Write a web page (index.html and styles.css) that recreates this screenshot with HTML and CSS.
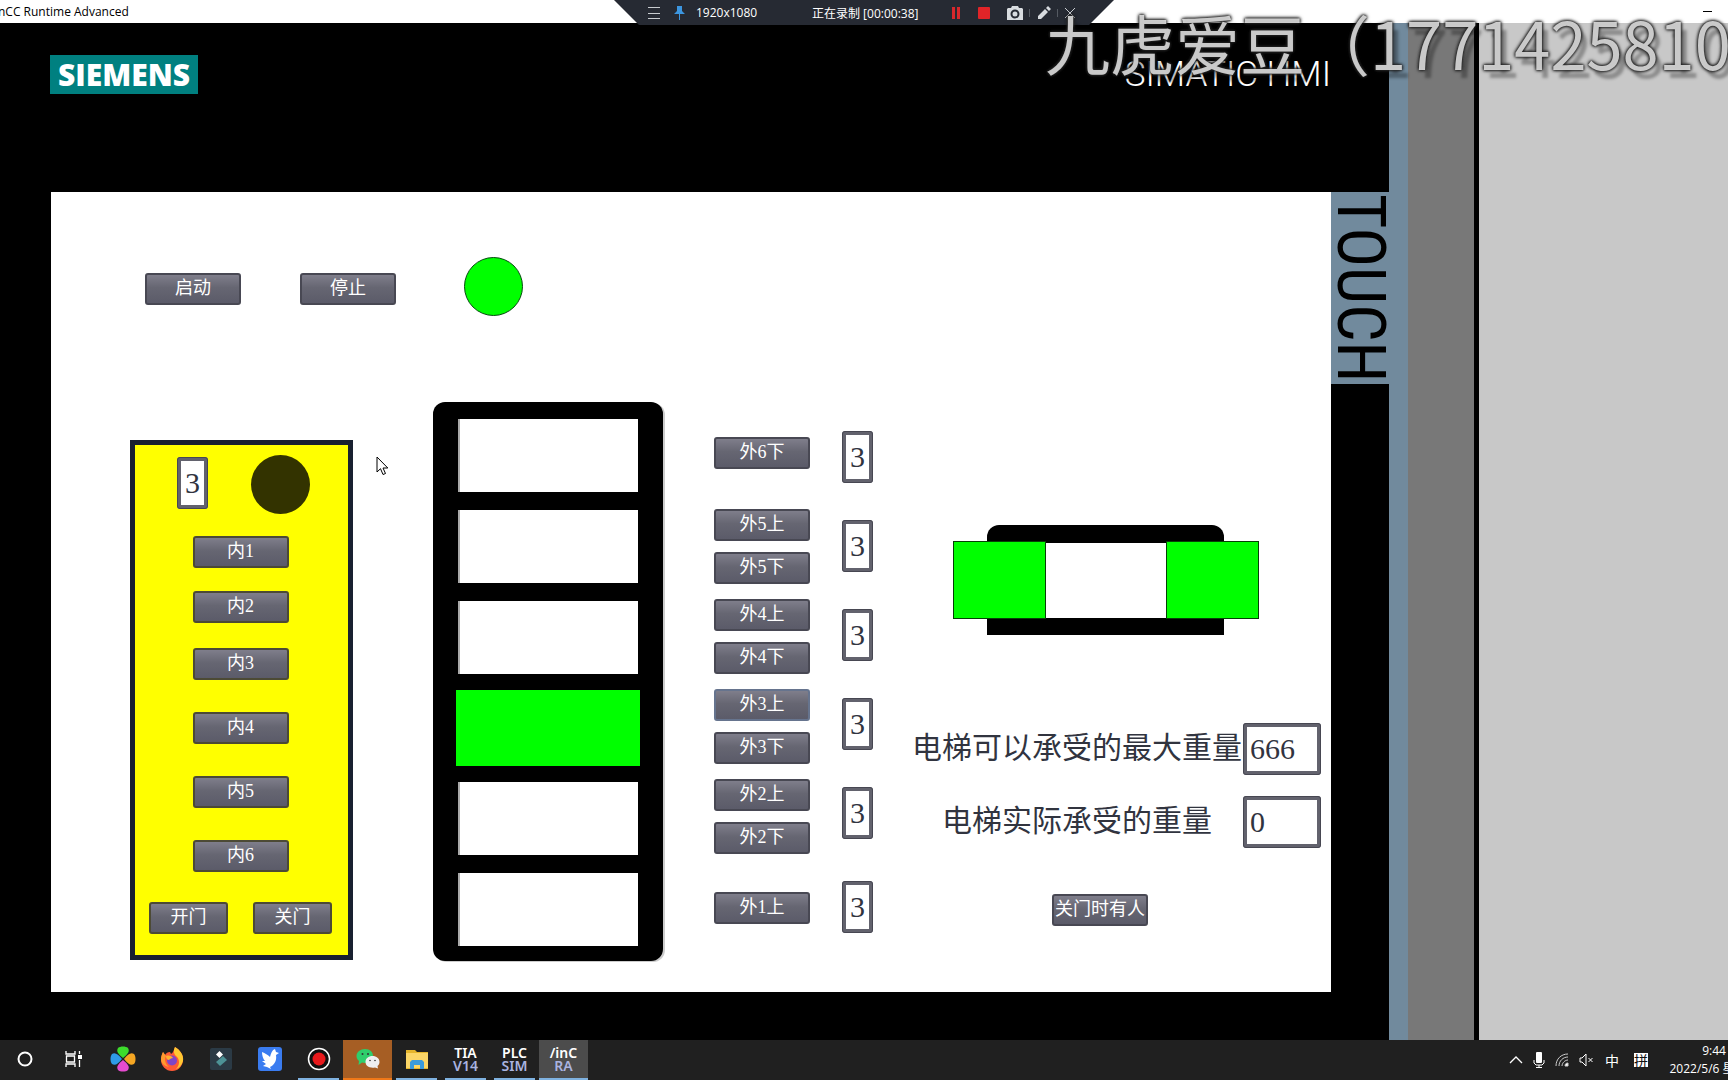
FILE: index.html
```html
<!DOCTYPE html>
<html lang="zh-CN">
<head>
  <meta charset="UTF-8">
  <meta name="viewport" content="width=device-width, initial-scale=1.0">
  <title>WinCC Runtime Advanced</title>
  <link rel="stylesheet" href="styles.css">
</head>
<body>
  <header class="titlebar">
    <span class="title">nCC Runtime Advanced</span>
    <span class="minimize"></span>
  </header>

  <main class="desktop">
    <div class="bezel">
      <div class="bezel-head">
        <div class="logo">SIEMENS</div>
        <div class="model">SIMATIC HMI</div>
      </div>
      <section class="screen">
        <div class="power">
          <div class="power-buttons">
            <button class="btn">启动</button>
            <button class="btn">停止</button>
          </div>
          <div class="lamp on"></div>
        </div>

        <div class="plant">
          <div class="car">
            <div class="car-head">
              <output class="digit">3</output>
              <div class="lamp"></div>
            </div>
            <div class="car-floors">
              <button class="btn">内1</button>
              <button class="btn">内2</button>
              <button class="btn">内3</button>
              <button class="btn">内4</button>
              <button class="btn">内5</button>
              <button class="btn">内6</button>
            </div>
            <div class="car-doors">
              <button class="btn">开门</button>
              <button class="btn">关门</button>
            </div>
          </div>

          <div class="shaft">
            <div class="cell"></div>
            <div class="cell"></div>
            <div class="cell"></div>
            <div class="cell here"></div>
            <div class="cell"></div>
            <div class="cell"></div>
          </div>

          <div class="calls">
            <div class="floor"><button class="btn">外6下</button></div>
            <div class="floor"><button class="btn">外5上</button><button class="btn">外5下</button></div>
            <div class="floor"><button class="btn">外4上</button><button class="btn">外4下</button></div>
            <div class="floor"><button class="btn focus">外3上</button><button class="btn">外3下</button></div>
            <div class="floor"><button class="btn">外2上</button><button class="btn">外2下</button></div>
            <div class="floor"><button class="btn">外1上</button></div>
          </div>

          <div class="digits">
            <output class="digit">3</output>
            <output class="digit">3</output>
            <output class="digit">3</output>
            <output class="digit">3</output>
            <output class="digit">3</output>
            <output class="digit">3</output>
          </div>

          <div class="side">
            <div class="door">
              <div class="leaf"></div>
              <div class="opening"></div>
              <div class="leaf"></div>
            </div>
            <div class="weights">
              <label for="maxWeight">电梯可以承受的最大重量</label>
              <input id="maxWeight" type="text" value="666">
              <label for="realWeight">电梯实际承受的重量</label>
              <input id="realWeight" type="text" value="0">
            </div>
            <button class="btn blocked">关门时有人</button>
          </div>
        </div>

        <svg class="pointer" width="13" height="20" viewBox="0 0 13 20">
          <path d="M1 1v15l3.500-3.300 2.500 5.800 2.500-1-2.500-5.500h4.800z" fill="#fff" stroke="#000"/>
        </svg>
      </section>
      <div class="touch">TOUCH</div>
    </div>
    <div class="edge"></div>
    <div class="wall"></div>
  </main>

  <footer class="taskbar">
    <nav class="apps">
      <button class="app" aria-label="Cortana">
        <svg width="24" height="24" viewBox="0 0 24 24"><circle cx="12" cy="12" r="6.500" fill="none" stroke="#fff" stroke-width="2"/></svg>
      </button>
      <button class="app" aria-label="任务视图">
        <svg width="24" height="24" viewBox="0 0 24 24" fill="none" stroke="#fff" stroke-width="1.300"><path d="M4 4v3h9V4M4 20v-3h9v3M4.500 9h8v6h-8zM17.500 4v3M17.500 13v7"/><path d="M16 8h4v4h-4z" fill="#fff" stroke="none"/></svg>
      </button>
      <button class="app" aria-label="四叶草">
        <svg width="26" height="26" viewBox="0 0 26 26">
          <path d="M13 12C8 8 6 5 8 2c2-2 8-2 10 0 2 3 0 6-5 10z" fill="#3ddc2c"/>
          <path d="M14 13c4-5 7-7 10-5 2 2 2 8 0 10-3 2-6 0-10-5z" fill="#f5a623"/>
          <path d="M13 14c5 4 7 7 5 10-2 2-8 2-10 0-2-3 0-6 5-10z" fill="#e64bd0"/>
          <path d="M12 13c-4 5-7 7-10 5-2-2-2-8 0-10 3-2 6 0 10 5z" fill="#2f9be8"/>
        </svg>
      </button>
      <button class="app" aria-label="Firefox">
        <svg width="24" height="24" viewBox="0 0 24 24">
          <path d="M3 5l2 3c1-2 3-3 5-3l1 2c2-1 3-4 4-7 5 3 9 8 8 14-1 6-5 10-11 10S1 19 1 13c0-3 1-5 2-8z" fill="#ff5a36"/>
          <path d="M15 0c5 3 9 8 8 14-1 4-4 7-7 8 4-4 4-10 0-13-2-2-3-5-1-9z" fill="#ffc832"/>
          <path d="M3 5l3 4c-2 3-1 8 3 11-5-1-8-4-8-8 0-3 1-5 2-7z" fill="#ff9a2e"/>
          <circle cx="12" cy="13.500" r="5" fill="#8045c8"/>
          <path d="M6 9c3-1 6 0 7 2-2 0-3 1-4 2-2 0-3-2-3-4z" fill="#ffb02e"/>
        </svg>
      </button>
      <button class="app" aria-label="Filmora">
        <svg width="24" height="24" viewBox="0 0 24 24"><rect x="1" y="1" width="22" height="22" rx="2" fill="#2b3a45"/><path d="M10.500 4l3.500 3.500-3.500 3.500L7 7.500z" fill="#fff"/><path d="M14 9l4 4-7 6-4-4z" fill="#4d9296"/></svg>
      </button>
      <button class="app" aria-label="迅雷">
        <svg width="24" height="24" viewBox="0 0 24 24"><rect width="24" height="24" rx="3" fill="#3a7cf0"/><path d="M4 5c3 1 6 3 8 5 1-4 2-7 5-8l1 3 3 1-3 2c1 6-2 10-6 12l1 2-4-2-4-1 3-2-4-3h3C5 12 4 8 4 5z" fill="#fff"/></svg>
      </button>
      <button class="app open" aria-label="录屏">
        <svg width="24" height="24" viewBox="0 0 24 24"><circle cx="12" cy="12" r="10.500" fill="#111" stroke="#fff" stroke-width="1.500"/><circle cx="12" cy="12" r="6.500" fill="#e8191c"/></svg>
      </button>
      <button class="app notify" aria-label="微信">
        <svg width="24" height="24" viewBox="0 0 24 24">
          <path d="M9 2c5 0 8 3 8 7s-3 7-8 7l-3-.500L2.500 18l.500-4C1 12 .500 11 .500 9c0-4 4-7 8.500-7z" fill="#2fce6c"/>
          <path d="M16.500 9c4 0 7 2.500 7 6 0 2-1 3-2 4l.500 2.500-3-1c-6 1-9.500-2-9.500-5.500s3-6 7-6z" fill="#eee"/>
          <g fill="#333"><circle cx="6.500" cy="7" r="1"/><circle cx="12" cy="7" r="1"/><circle cx="14" cy="13.500" r=".800"/><circle cx="19" cy="13.500" r=".800"/></g>
        </svg>
      </button>
      <button class="app open" aria-label="文件资源管理器">
        <svg width="24" height="24" viewBox="0 0 24 24"><path d="M1 3h9l2 2h11v17H1z" fill="#e5b52c"/><path d="M1 6h22v15H1z" fill="#fbd667"/><path d="M5 22v-7l2-2h10l2 2v7h-4v-4H9v4z" fill="#3a9bdc"/></svg>
      </button>
      <button class="app open tile"><span>TIA</span><span>V14</span></button>
      <button class="app open tile"><span>PLC</span><span>SIM</span></button>
      <button class="app active tile"><span>/inC</span><span>RA</span></button>
    </nav>
    <div class="tray">
      <svg width="14" height="8" viewBox="0 0 14 8"><path d="M1 7l6-6 6 6" fill="none" stroke="#fff" stroke-width="1.300"/></svg>
      <svg width="12" height="16" viewBox="0 0 12 16"><rect x="3" width="6" height="11" rx="1" fill="#fff"/><path d="M1 8v3l2 2h6l2-2V8M6 13v3M3 15.500h6" fill="none" stroke="#fff"/></svg>
      <svg width="14" height="14" viewBox="0 0 14 14" fill="none" stroke="#ccc"><path d="M1 13C1 6 6 1 13 1M4 13c0-5 4-9 9-9M7 13c0-3 3-6 6-6"/><path d="M10 13c0-2 1-3 3-3v3z" fill="#fff"/></svg>
      <svg width="15" height="14" viewBox="0 0 15 14" fill="none" stroke="#fff"><path d="M1 5h2l4-4v12L3 9H1zM9.500 5l4 4M13.500 5l-4 4"/></svg>
      <span class="ime">中</span>
      <span class="ime pinyin">拼</span>
    </div>
    <div class="clock">
      <span>9:44</span>
      <span>2022/5/6 星期五</span>
    </div>
  </footer>

  <div class="recorder">
    <svg width="12" height="12" viewBox="0 0 12 12"><path d="M0 .5h12M0 6.500h12M0 11.500h12" stroke="#c8ccd0"/></svg>
    <svg class="pin" width="11" height="14" viewBox="0 0 11 14"><path d="M3 0h5v5l3 3H0l3-3z" fill="#3c96e0"/><path d="M5.500 8v6" stroke="#3c96e0"/></svg>
    <span class="size">1920x1080</span>
    <span class="status">正在录制 [00:00:38]</span>
    <svg class="pause" width="9" height="12" viewBox="0 0 9 12"><path d="M0 0h3v12H0zM5 0h3v12H5z" fill="#d8282c"/></svg>
    <svg class="stop" width="12" height="12" viewBox="0 0 12 12"><rect width="12" height="12" rx="1" fill="#e02428"/></svg>
    <svg class="camera" width="16" height="14" viewBox="0 0 16 14"><path d="M1 2h3l1-2h6l1 2h3l1 1v11H0V3z" fill="#d8dce0"/><circle cx="8" cy="8" r="3.500" fill="#d8dce0" stroke="#262a33" stroke-width="2"/></svg>
    <span class="bar"></span>
    <svg width="14" height="14" viewBox="0 0 14 14"><path d="M8 3l3 3-7 7H1v-3zM9 2l2-2 3 3-2 2z" fill="#d8dce0"/></svg>
    <span class="bar"></span>
    <svg width="10" height="10" viewBox="0 0 10 10"><path d="M0 0l10 10M10 0L0 10" stroke="#c8ccd0"/></svg>
  </div>

  <div class="watermark">九虎爱豆（1771425810</div>
</body>
</html>
```
FILE: styles.css
```css
* { box-sizing: border-box; }
body {
  position: relative;
  display: flex;
  flex-direction: column;
  min-height: 100vh;
  margin: 0;
  overflow: hidden;
  background: #000;
  font-family: "Open Sans", "Noto Sans CJK SC", sans-serif;
}
button {
  padding: 0;
  border: none;
  cursor: pointer;
}
svg { display: block; flex: none; }

/* title bar */
.titlebar {
  display: flex;
  justify-content: space-between;
  align-items: center;
  height: 23px;
  padding-right: 16px;
  background: #fff;
  font-size: 12px;
}
.title { margin-left: -2px; white-space: nowrap; }
.minimize { width: 9px; height: 1px; background: #000; }

/* recording toolbar and watermark float over everything */
.recorder {
  position: absolute;
  top: 0;
  left: 614px;
  display: flex;
  align-items: center;
  width: 500px;
  height: 25px;
  padding-left: 34px;
  background: #262a33;
  clip-path: polygon(0 0, 100% 0, 95% 100%, 5% 100%);
  color: #fff;
  font-size: 12px;
  white-space: nowrap;
}
.recorder .pin { margin: 0 11px 0 14px; }
.recorder .size { width: 116px; }
.recorder .status { width: 140px; }
.recorder .stop { margin: 0 17px; }
.recorder .bar {
  width: 1px;
  height: 8px;
  margin: 0 7px 0 6px;
  background: #555a62;
}
.watermark {
  position: absolute;
  top: 0;
  right: 0;
  left: 1045px;
  overflow: hidden;
  font-family: "Noto Sans CJK SC", sans-serif;
  font-size: 65px;
  line-height: 84px;
  white-space: nowrap;
  color: rgba(255, 255, 255, 0.76);
  text-shadow: 0 0 3px #222, 0 0 3px #222, 0 0 4px #222, 6px 8px 3px rgba(0, 0, 0, 0.3);
  pointer-events: none;
}

/* device */
.desktop { display: flex; flex: 1; }
.bezel {
  flex: 1;
  display: grid;
  grid-template-columns: 1fr 58px;
  grid-template-rows: 169px 1fr;
  padding: 0 0 48px 51px;
  background: #000;
}
.bezel-head {
  display: flex;
  justify-content: space-between;
  align-items: flex-start;
  padding-top: 32px;
}
.logo {
  width: 148px;
  margin-left: -1px;
  background: #008080;
  color: #fff;
  font-size: 30px;
  font-weight: 800;
  line-height: 39px;
  text-align: center;
}
.model {
  color: #fff;
  font-family: Roboto, sans-serif;
  font-size: 35px;
  font-weight: 300;
  line-height: 40px;
}
.touch {
  grid-row: 2;
  grid-column: 2;
  align-self: start;
  height: 192px;
  background: #718a9d;
  color: #000;
  font-family: "Liberation Sans Narrow", "Roboto Condensed", Roboto, sans-serif;
  font-size: 66px;
  line-height: 58px;
  text-align: center;
  writing-mode: vertical-rl;
}
.edge {
  width: 90px;
  border-left: 19px solid #718a9d;
  border-right: 5px solid #000;
  background: #787878;
}
.wall { width: 249px; background: #c8c8c8; }

/* elevator screen */
.screen {
  position: relative;
  grid-row: 2;
  grid-column: 1;
  background: #fff;
}
.btn {
  width: 96px;
  height: 32px;
  padding-bottom: 2px;
  border: 2px solid #484853;
  border-radius: 3px;
  background: linear-gradient(#7f7e8b, #666672 45%, #5b5b69);
  color: #fff;
  font-family: "Liberation Serif", "Noto Sans CJK SC", serif;
  font-size: 18px;
  line-height: 26px;
  white-space: nowrap;
}
.btn.focus { border-color: #66748e; }
.lamp {
  width: 59px;
  height: 59px;
  border-radius: 50%;
  background: #333300;
}
.lamp.on {
  border: 1px solid #064a10;
  background: #00ff00;
}
.digit {
  display: block;
  width: 31px;
  height: 52px;
}
.digit, .weights input {
  border: 4px solid #62626d;
  border-radius: 3px;
  outline: 1px solid #474752;
  outline-offset: -1px;
  background: #fff;
  color: #31343f;
  font-family: "Liberation Serif", serif;
  font-size: 30px;
  line-height: 44px;
  text-align: center;
}
.power {
  display: flex;
  align-items: center;
  gap: 68px;
  padding: 65px 0 0 94px;
}
.power-buttons {
  display: flex;
  gap: 59px;
  padding-top: 5px;
}
.plant {
  display: flex;
  align-items: flex-start;
  padding: 86px 0 30px 79px;
}

.car {
  width: 223px;
  margin: 38px 80px 0 0;
  padding: 10px 16px 21px 14px;
  border: 5px solid #182030;
  background: #ffff00;
}
.car-head {
  display: flex;
  align-items: flex-start;
  gap: 43px;
  padding-left: 28px;
}
.car-head .digit { margin-top: 2px; }
.car-floors {
  display: flex;
  flex-direction: column;
  align-items: center;
  gap: 32px;
  padding: 22px 0 30px;
}
.car-floors .btn:nth-child(-n+2) { margin-bottom: -9px; }
.car-floors .btn:nth-child(3) { margin-top: 2px; }
.car-doors { display: flex; justify-content: space-between; }
.car-doors .btn { width: 79px; }
.car .btn { border-color: #4c4a35; }

.shaft {
  display: flex;
  flex-direction: column;
  gap: 18px;
  width: 230px;
  margin-right: 51px;
  padding: 17px 25px 15px;
  border-radius: 12px;
  background: #000;
  box-shadow: 2px 1px 0 #ccc;
}
.cell {
  height: 73px;
  border-left: 2px solid #aaa;
  background: #fff;
}
.cell.here {
  height: 76px;
  margin: -2px;
  border: none;
  background: #00ff00;
}

.calls {
  display: flex;
  flex-direction: column;
  gap: 15px;
  margin: 35px 32px 0 0;
}
.floor {
  display: flex;
  flex-direction: column;
  gap: 11px;
}
.floor:first-child { margin-bottom: 25px; }
.floor:last-child { margin-top: 23px; }
.digits {
  display: flex;
  flex-direction: column;
  gap: 37px;
  margin: 29px 39px 0 0;
}
.digits .digit:last-child { margin-top: 5px; }

.side { margin-top: 123px; }
.door {
  position: relative;
  isolation: isolate;
  display: flex;
  width: 306px;
  height: 110px;
  margin-left: 41px;
  padding: 16px 0;
}
/* frame behind the leaves */
.door::before {
  content: "";
  position: absolute;
  z-index: -1;
  inset: 0 35px 0 34px;
  border-radius: 12px 12px 0 0;
  background: #000;
}
.leaf {
  width: 93px;
  border: 1px solid #063f06;
  background: #00ff00;
}
.opening {
  flex: 1;
  margin: 2px 0 1px;
  background: #fff;
}
.weights {
  display: grid;
  grid-template-columns: auto 78px;
  align-items: start;
  gap: 21px 1px;
  margin-top: 88px;
}
.weights label {
  color: #31343f;
  font-family: "Noto Sans CJK SC", sans-serif;
  font-size: 30px;
  font-weight: 400;
  line-height: 44px;
  text-align: center;
  white-space: nowrap;
}
.weights input {
  width: 78px;
  height: 52px;
  padding: 0 3px;
  text-align: left;
}
.blocked { display: block; margin: 46px 0 0 140px; }
.pointer {
  position: absolute;
  top: 264px;
  left: 325px;
}

/* taskbar */
.taskbar {
  display: flex;
  height: 40px;
  background: #202020;
  color: #fff;
}
.apps { display: flex; flex: 1; }
.app {
  display: flex;
  align-items: center;
  justify-content: center;
  width: 49px;
  border-bottom: 2px solid transparent;
  background: none;
  color: #fff;
}
.app.open {
  background: linear-gradient(#7fb2e0, #7fb2e0) center bottom / 41px 2px no-repeat border-box;
}
.app.active { border-color: #7fb2e0; background: #4c4c4c; }
.app.notify { border-color: #f07818; background: #a65e24; }
.tile {
  flex-direction: column;
  font-family: "Noto Sans", sans-serif;
  font-size: 14px;
  font-weight: 600;
  line-height: 13px;
}
.tile span:last-child { color: #aab4e0; }
.tray {
  display: flex;
  align-items: center;
  gap: 10px;
  margin-right: 20px;
}
.ime {
  margin-left: 1px;
  font-family: "Noto Sans CJK SC", sans-serif;
  font-size: 14px;
  line-height: 14px;
}
.pinyin {
  margin-left: 5px;
  background: #fff;
  color: #111;
}
.clock {
  display: flex;
  flex-direction: column;
  align-items: center;
  width: 92px;
  margin-right: -32px;
  padding-top: 2px;
  font-size: 12px;
  line-height: 18px;
  white-space: nowrap;
}
```
